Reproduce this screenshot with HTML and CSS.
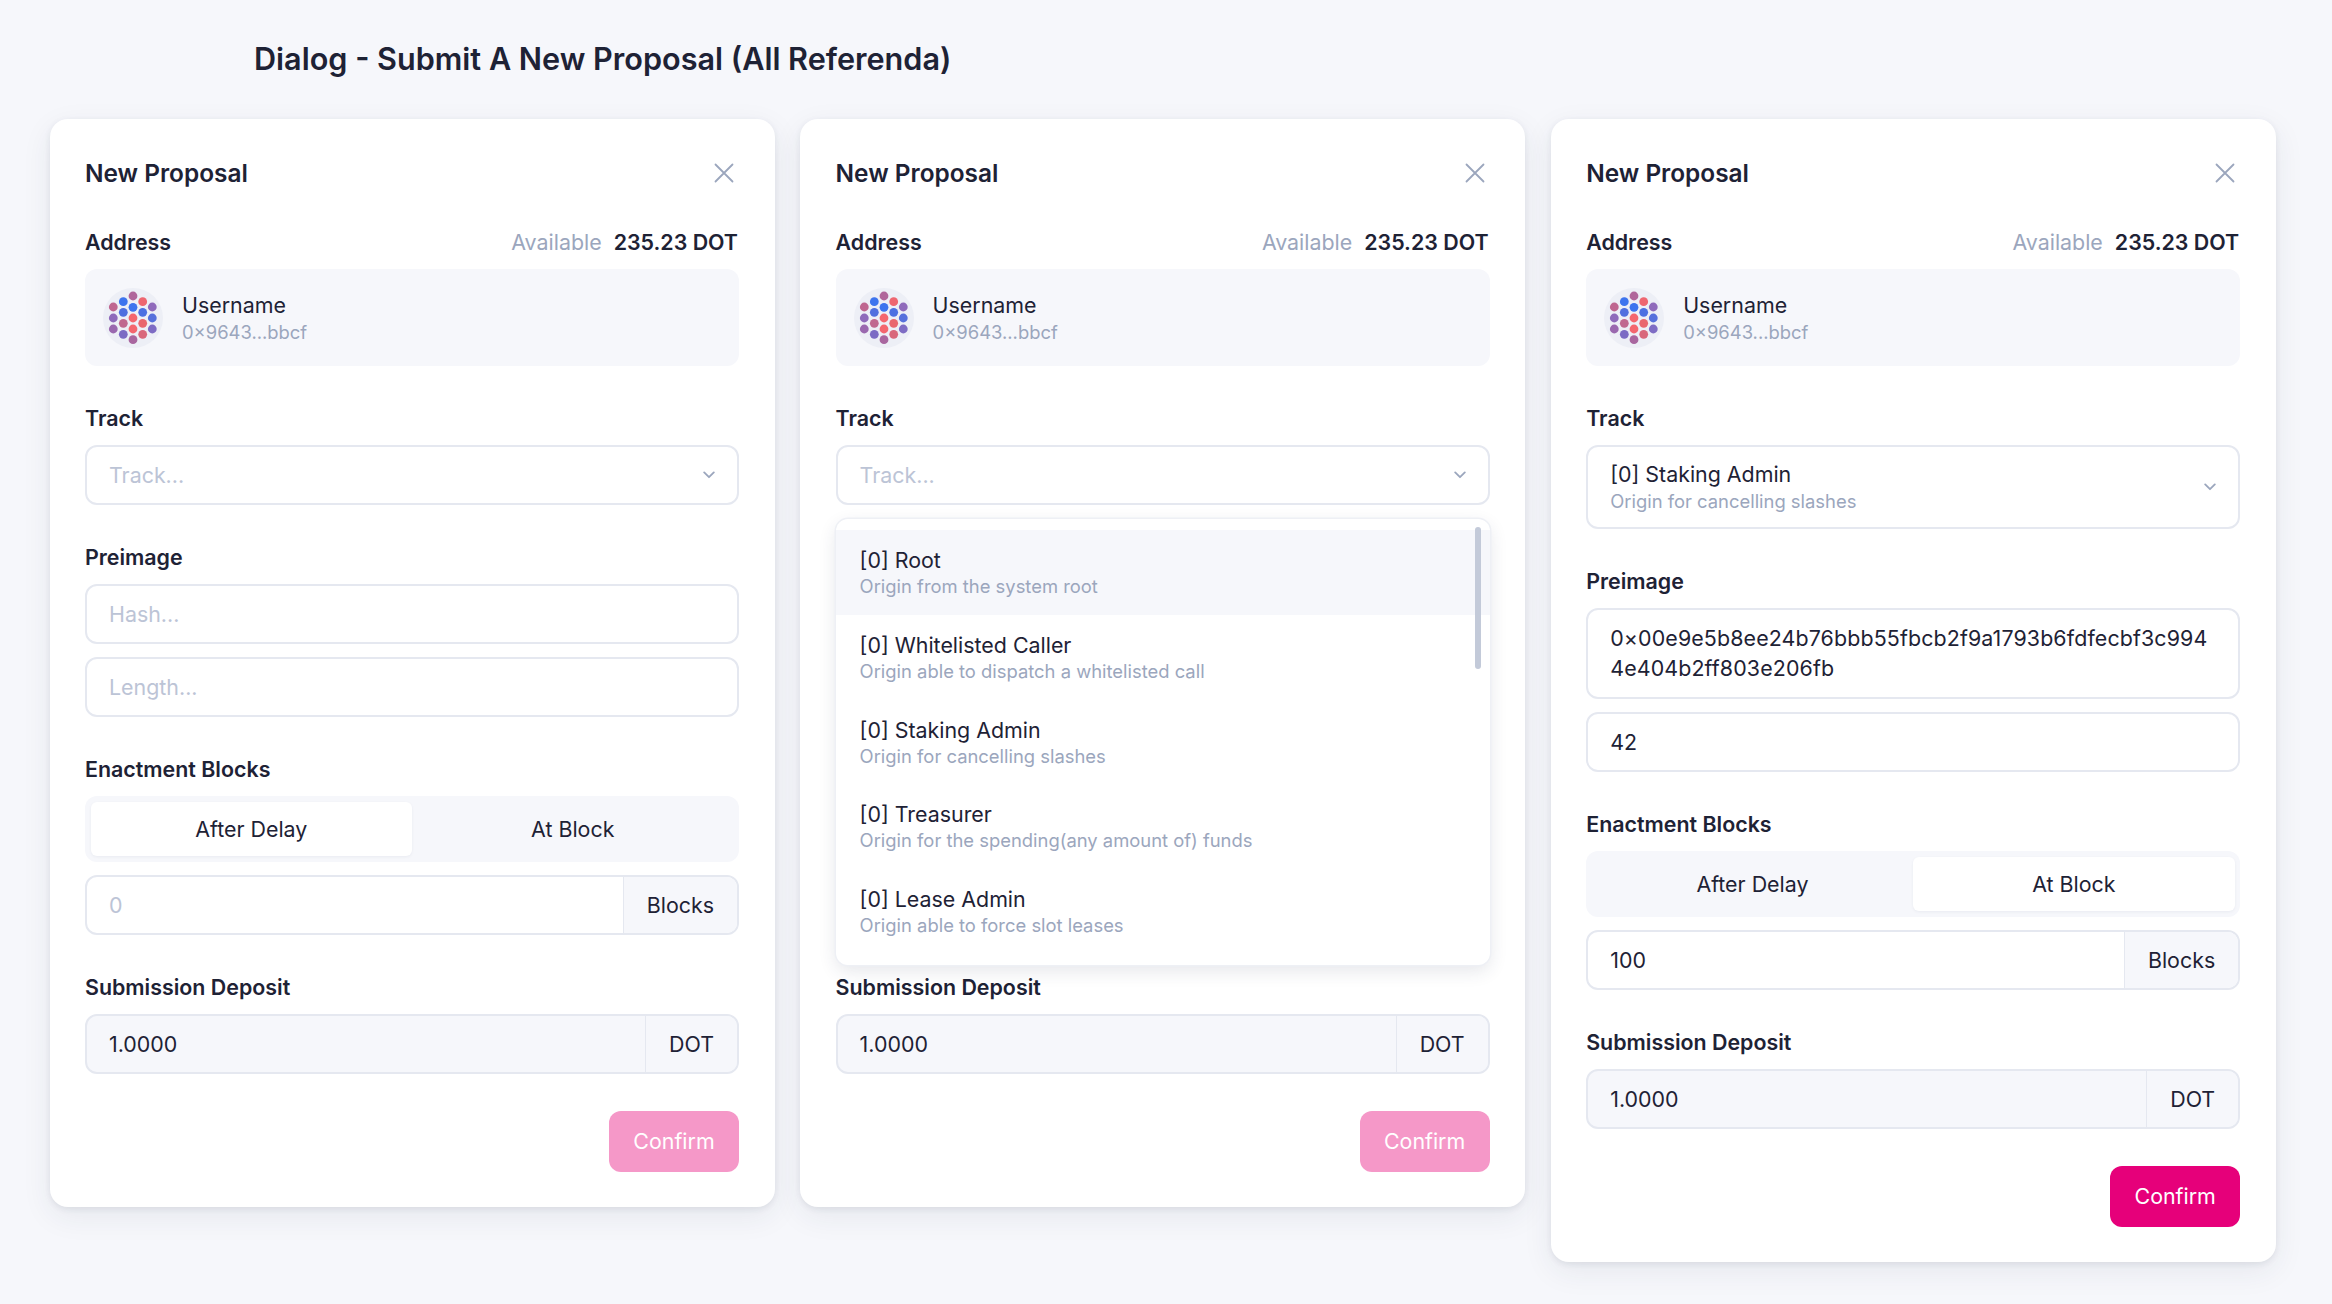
FILE: index.html
```html
<!DOCTYPE html>
<html lang="en">
<head>
<meta charset="utf-8">
<title>Dialog - Submit A New Proposal (All Referenda)</title>
<link rel="stylesheet" href="styles.css">
</head>
<body>
<svg class="defs" width="0" height="0" aria-hidden="true">
  <symbol id="identicon" viewBox="0 0 60 60">
    <circle cx="30" cy="30" r="30" fill="#edeff6"/>
    <circle cx="30" cy="8" r="4.4" fill="#b0669b"/>
    <circle cx="30" cy="19.3" r="4.4" fill="#3d74ee"/>
    <circle cx="30" cy="30" r="4.4" fill="#f4666e"/>
    <circle cx="30" cy="41" r="4.4" fill="#f4666e"/>
    <circle cx="30" cy="51.7" r="4.4" fill="#a9669f"/>
    <circle cx="20.3" cy="13.7" r="4.4" fill="#3d74ee"/>
    <circle cx="20.3" cy="24.3" r="4.4" fill="#4f6fdf"/>
    <circle cx="20.3" cy="35.3" r="4.4" fill="#c0688f"/>
    <circle cx="20.3" cy="46.3" r="4.4" fill="#7c6bc4"/>
    <circle cx="39.7" cy="13.7" r="4.4" fill="#ee6670"/>
    <circle cx="39.7" cy="24.3" r="4.4" fill="#4c70e2"/>
    <circle cx="39.7" cy="35.3" r="4.4" fill="#e9666e"/>
    <circle cx="39.7" cy="46.3" r="4.4" fill="#d9677b"/>
    <circle cx="10.3" cy="19" r="4.4" fill="#bf6690"/>
    <circle cx="10.3" cy="30" r="4.4" fill="#8e6abb"/>
    <circle cx="10.3" cy="41" r="4.4" fill="#9a68af"/>
    <circle cx="49.3" cy="19" r="4.4" fill="#8f6abb"/>
    <circle cx="49.3" cy="30" r="4.4" fill="#5670dc"/>
    <circle cx="49.3" cy="41" r="4.4" fill="#7e6cc4"/>
  </symbol>
  <symbol id="close" viewBox="0 0 20 20">
    <path d="M1.5 1.5l17 17M18.5 1.5l-17 17" fill="none" stroke="currentColor" stroke-width="1.8" stroke-linecap="round"/>
  </symbol>
  <symbol id="chevron" viewBox="0 0 12 8">
    <path d="M1.2 1.4L6 6.2l4.8-4.8" fill="none" stroke="currentColor" stroke-width="1.8" stroke-linecap="round" stroke-linejoin="round"/>
  </symbol>
</svg>

<h1 class="page-title">Dialog - Submit A New Proposal (All Referenda)</h1>

<main class="cards">

  <section class="card">
    <header class="card-head">
      <h2 class="card-title">New Proposal</h2>
      <svg class="close"><use href="#close"/></svg>
    </header>
    <div class="section section-first">
      <div class="label-row">
        <span class="label">Address</span>
        <span class="balance"><span class="muted">Available</span><span class="label">235.23 DOT</span></span>
      </div>
      <div class="account">
        <svg class="avatar"><use href="#identicon"/></svg>
        <div class="account-text"><div class="account-name">Username</div><div class="sub">0×9643...bbcf</div></div>
      </div>
    </div>
    <div class="section">
      <div class="label-row"><span class="label">Track</span></div>
      <div class="field select"><span class="placeholder">Track...</span><svg class="chevron"><use href="#chevron"/></svg></div>
    </div>
    <div class="section">
      <div class="label-row"><span class="label">Preimage</span></div>
      <div class="stack">
        <div class="field"><span class="placeholder">Hash...</span></div>
        <div class="field"><span class="placeholder">Length...</span></div>
      </div>
    </div>
    <div class="section">
      <div class="label-row"><span class="label">Enactment Blocks</span></div>
      <div class="tabs">
        <div class="tab tab-active">After Delay</div>
        <div class="tab">At Block</div>
      </div>
      <div class="group group-blocks">
        <div class="group-main"><span class="placeholder">0</span></div>
        <div class="addon">Blocks</div>
      </div>
    </div>
    <div class="section">
      <div class="label-row"><span class="label">Submission Deposit</span></div>
      <div class="group group-filled">
        <div class="group-main">1.0000</div>
        <div class="addon">DOT</div>
      </div>
    </div>
    <footer class="card-foot"><button class="confirm confirm-off" type="button">Confirm</button></footer>
  </section>

  <section class="card">
    <header class="card-head">
      <h2 class="card-title">New Proposal</h2>
      <svg class="close"><use href="#close"/></svg>
    </header>
    <div class="section section-first">
      <div class="label-row">
        <span class="label">Address</span>
        <span class="balance"><span class="muted">Available</span><span class="label">235.23 DOT</span></span>
      </div>
      <div class="account">
        <svg class="avatar"><use href="#identicon"/></svg>
        <div class="account-text"><div class="account-name">Username</div><div class="sub">0×9643...bbcf</div></div>
      </div>
    </div>
    <div class="section section-track">
      <div class="label-row"><span class="label">Track</span></div>
      <div class="field select"><span class="placeholder">Track...</span><svg class="chevron"><use href="#chevron"/></svg></div>
      <div class="menu">
        <div class="menu-thumb"></div>
        <div class="option option-hover"><div class="option-name">[0] Root</div><div class="sub">Origin from the system root</div></div>
        <div class="option"><div class="option-name">[0] Whitelisted Caller</div><div class="sub">Origin able to dispatch a whitelisted call</div></div>
        <div class="option"><div class="option-name">[0] Staking Admin</div><div class="sub">Origin for cancelling slashes</div></div>
        <div class="option"><div class="option-name">[0] Treasurer</div><div class="sub">Origin for the spending(any amount of) funds</div></div>
        <div class="option"><div class="option-name">[0] Lease Admin</div><div class="sub">Origin able to force slot leases</div></div>
      </div>
    </div>
    <div class="section under-menu">
      <div class="label-row"><span class="label">Preimage</span></div>
      <div class="stack">
        <div class="field"><span class="placeholder">Hash...</span></div>
        <div class="field"><span class="placeholder">Length...</span></div>
      </div>
    </div>
    <div class="section under-menu">
      <div class="label-row"><span class="label">Enactment Blocks</span></div>
      <div class="tabs">
        <div class="tab tab-active">After Delay</div>
        <div class="tab">At Block</div>
      </div>
      <div class="group group-blocks">
        <div class="group-main"><span class="placeholder">0</span></div>
        <div class="addon">Blocks</div>
      </div>
    </div>
    <div class="section">
      <div class="label-row"><span class="label">Submission Deposit</span></div>
      <div class="group group-filled">
        <div class="group-main">1.0000</div>
        <div class="addon">DOT</div>
      </div>
    </div>
    <footer class="card-foot"><button class="confirm confirm-off" type="button">Confirm</button></footer>
  </section>

  <section class="card">
    <header class="card-head">
      <h2 class="card-title">New Proposal</h2>
      <svg class="close"><use href="#close"/></svg>
    </header>
    <div class="section section-first">
      <div class="label-row">
        <span class="label">Address</span>
        <span class="balance"><span class="muted">Available</span><span class="label">235.23 DOT</span></span>
      </div>
      <div class="account">
        <svg class="avatar"><use href="#identicon"/></svg>
        <div class="account-text"><div class="account-name">Username</div><div class="sub">0×9643...bbcf</div></div>
      </div>
    </div>
    <div class="section">
      <div class="label-row"><span class="label">Track</span></div>
      <div class="field select select-filled">
        <div><div class="option-name">[0] Staking Admin</div><div class="sub">Origin for cancelling slashes</div></div>
        <svg class="chevron"><use href="#chevron"/></svg>
      </div>
    </div>
    <div class="section">
      <div class="label-row"><span class="label">Preimage</span></div>
      <div class="stack">
        <div class="field field-multi">0×00e9e5b8ee24b76bbb55fbcb2f9a1793b6fdfecbf3c9944e404b2ff803e206fb</div>
        <div class="field">42</div>
      </div>
    </div>
    <div class="section">
      <div class="label-row"><span class="label">Enactment Blocks</span></div>
      <div class="tabs">
        <div class="tab">After Delay</div>
        <div class="tab tab-active">At Block</div>
      </div>
      <div class="group group-blocks">
        <div class="group-main">100</div>
        <div class="addon">Blocks</div>
      </div>
    </div>
    <div class="section">
      <div class="label-row"><span class="label">Submission Deposit</span></div>
      <div class="group group-filled">
        <div class="group-main">1.0000</div>
        <div class="addon">DOT</div>
      </div>
    </div>
    <footer class="card-foot"><button class="confirm" type="button">Confirm</button></footer>
  </section>

</main>
</body>
</html>
```
FILE: styles.css
```css
* { box-sizing: border-box; }

html, body { margin: 0; padding: 0; }

body {
  width: 2332px;
  height: 1304px;
  overflow: hidden;
  background: #f6f7fb;
  color: #1e2235;
  font-family: "Inter", "Liberation Sans", sans-serif;
  font-size: 21.4px;
  line-height: 30px;
}

.defs { position: absolute; }

.page-title {
  margin: 0;
  padding: 37px 0 0 254px;
  height: 119px;
  font-size: 30.6px;
  line-height: 44px;
  font-weight: 600;
}

.cards {
  display: flex;
  align-items: flex-start;
  gap: 25.6px;
  padding-left: 49.5px;
}

.card {
  width: 725px;
  flex: none;
  padding: 36px 35.5px 35px 35.5px;
  background: #fff;
  border-radius: 18px;
  box-shadow: 0 2px 6px rgba(40, 50, 80, .09), 0 9px 30px rgba(40, 50, 80, .08);
}

.card-head {
  display: flex;
  justify-content: space-between;
  align-items: center;
  height: 36px;
}

.card-title {
  margin: 0;
  font-size: 24.4px;
  line-height: 36px;
  font-weight: 600;
}

.close {
  width: 20px;
  height: 20px;
  margin-right: 5px;
  color: #9ba6bd;
}

.section { margin-top: 37px; position: relative; }
.section-first { margin-top: 36px; }
.under-menu { visibility: hidden; }

.label-row {
  display: flex;
  justify-content: space-between;
  height: 30px;
  margin-bottom: 12px;
}

.label { font-weight: 600; }

.balance { display: flex; gap: 12px; padding-right: 1px; }

.muted { color: #9ba6bd; }

.account {
  display: flex;
  align-items: center;
  gap: 19px;
  height: 97px;
  padding-left: 18px;
  background: #f6f7fb;
  border-radius: 12px;
}

.avatar { width: 60px; height: 60px; flex: none; }

.account-name { line-height: 28px; }

.sub {
  color: #9ba6bd;
  font-size: 18.4px;
  line-height: 26px;
}

.field {
  display: flex;
  align-items: center;
  justify-content: space-between;
  height: 60px;
  padding: 0 22px;
  background: #fff;
  border: 2px solid #e5e8f0;
  border-radius: 12px;
}

.field-multi {
  display: block;
  height: 91px;
  padding: 13px 22px;
  letter-spacing: .12px;
  word-break: break-all;
}

.select-filled { height: 84px; }

.placeholder { color: #bcc4d6; }

.chevron {
  width: 12px;
  height: 8px;
  flex: none;
  color: #9ba6bd;
}

.stack { display: flex; flex-direction: column; gap: 13px; }

.tabs {
  display: flex;
  height: 66px;
  padding: 6px 5.5px;
  margin-bottom: 13px;
  background: #f6f7fb;
  border-radius: 12px;
}

.tab {
  flex: 1;
  display: flex;
  align-items: center;
  justify-content: center;
  border-radius: 6px;
}

.tab-active {
  background: #fff;
  box-shadow: 0 1px 3px rgba(40, 50, 80, .06);
}

.group {
  display: flex;
  height: 60px;
  border: 2px solid #e5e8f0;
  border-radius: 12px;
  overflow: hidden;
}

.group-main {
  flex: 1;
  display: flex;
  align-items: center;
  padding-left: 22px;
}

.addon {
  display: flex;
  align-items: center;
  padding: 0 23px 0 23px;
  background: #f6f7fb;
  border-left: 1px solid #e5e8f0;
}

.group-filled { background: #f6f7fb; }

.card-foot {
  display: flex;
  justify-content: flex-end;
  margin-top: 37px;
}

.confirm {
  width: 130px;
  height: 61px;
  padding: 0 0 2px;
  border: 0;
  border-radius: 12px;
  background: #e6007a;
  color: #fff;
  font: inherit;
}

.confirm-off { background: #f598c8; }

.menu {
  position: absolute;
  top: 116px;
  left: 0;
  right: 0;
  height: 446px;
  padding-top: 11px;
  background: #fff;
  border-radius: 12px;
  box-shadow: 0 0 0 1.5px #eef0f5, 0 6px 18px rgba(40, 50, 80, .12);
  overflow: hidden;
  z-index: 2;
}

.menu-thumb {
  position: absolute;
  top: 8px;
  right: 8.5px;
  width: 6px;
  height: 142px;
  background: #c3cad9;
  border-radius: 3px;
}

.option {
  height: 84.8px;
  padding: 16px 24px 0;
}

.option-hover { background: #f6f7fb; }

.option-name { line-height: 28px; }

.option .sub { line-height: 25px; }
```
